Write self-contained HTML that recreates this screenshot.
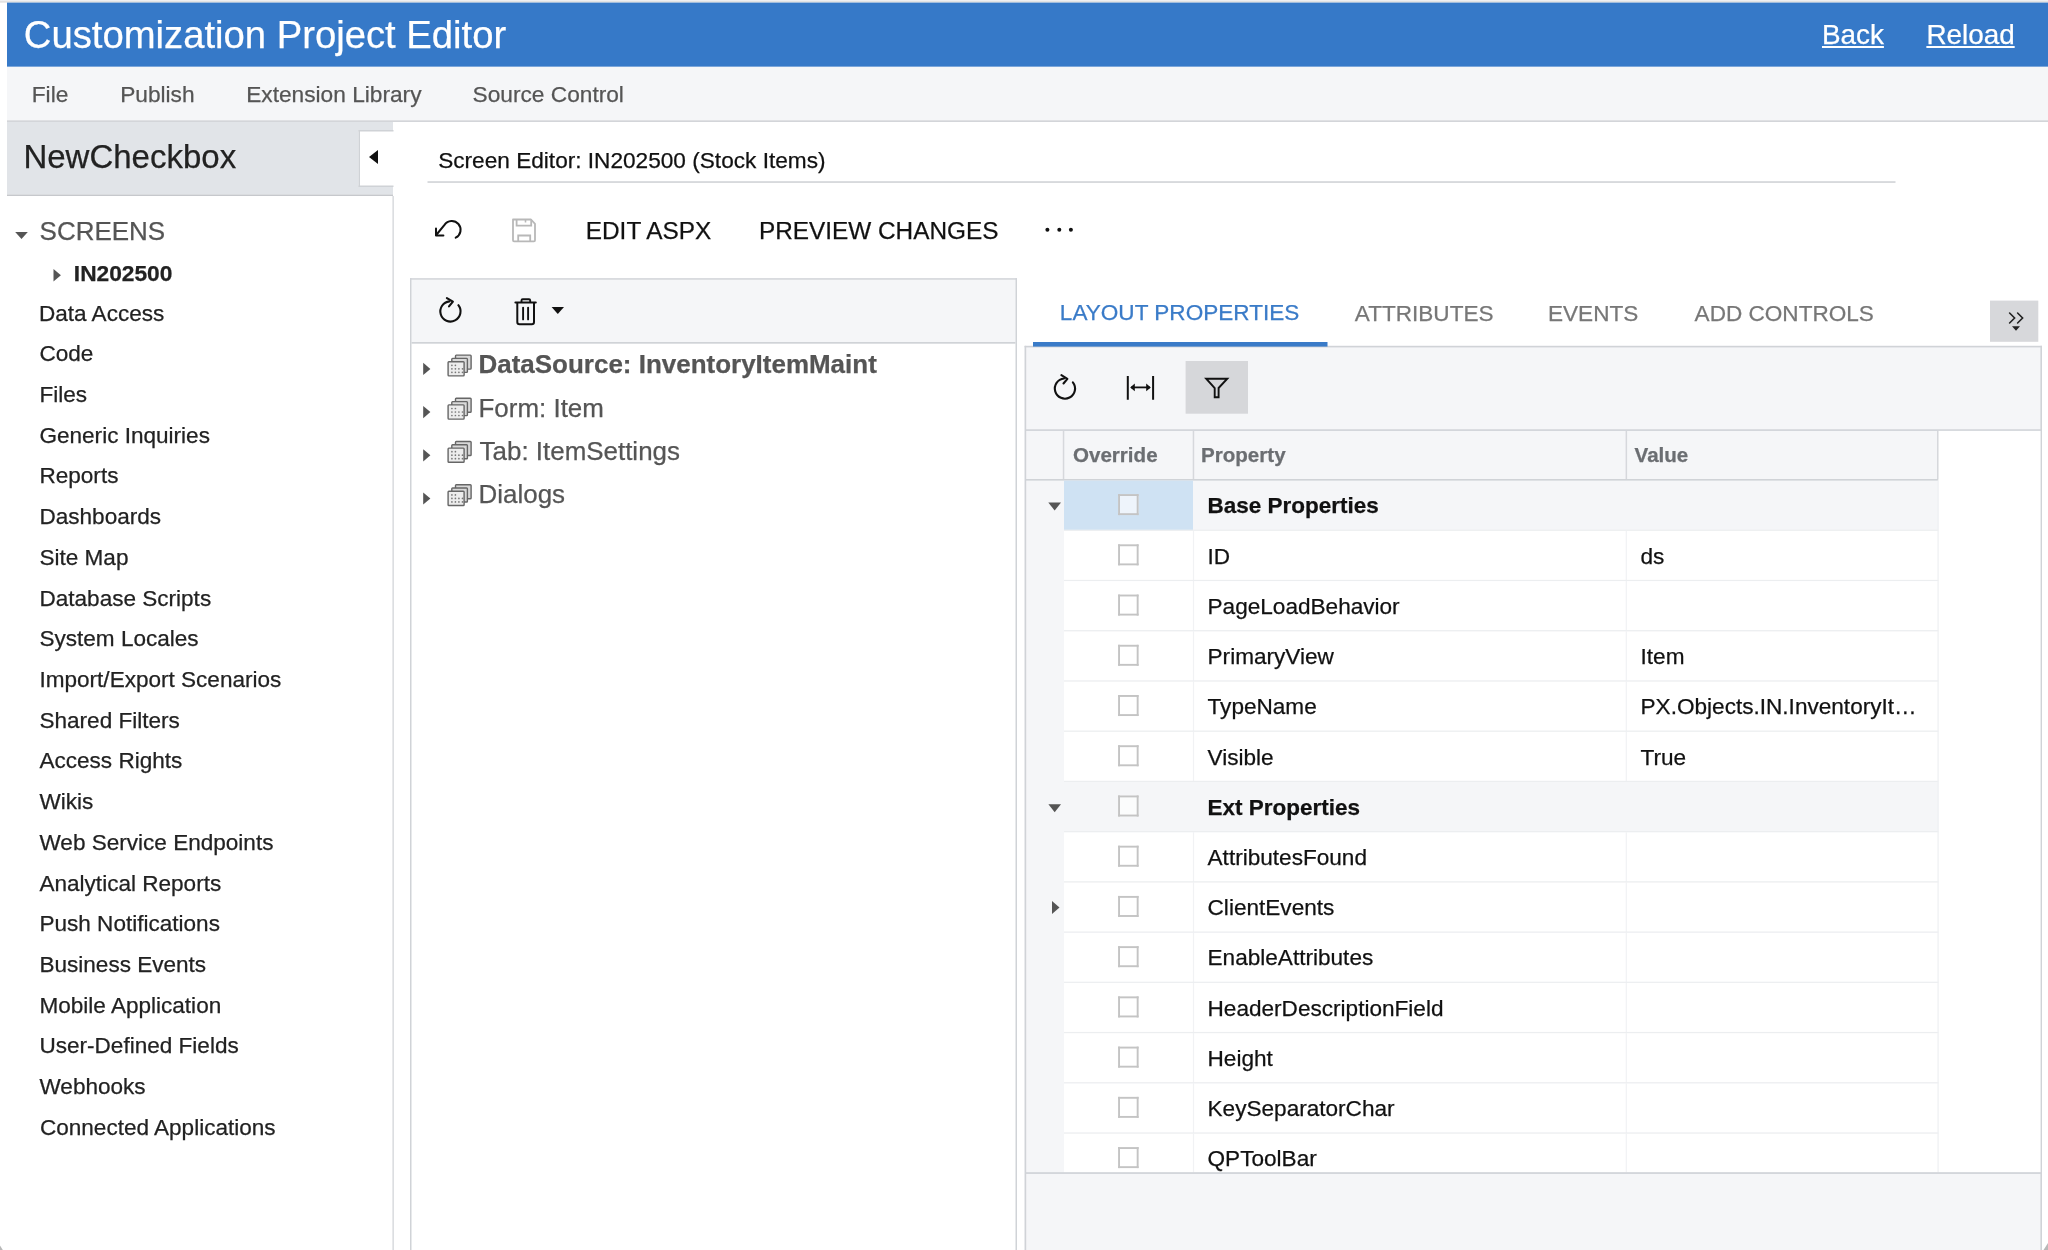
<!DOCTYPE html>
<html><head><meta charset="utf-8">
<style>
*{box-sizing:border-box;margin:0;padding:0}
html,body{width:2048px;height:1250px;overflow:hidden;background:#fff;font-family:"Liberation Sans",sans-serif;color:#000}
.a{position:absolute}
.t{position:absolute;white-space:nowrap;line-height:1;-webkit-text-stroke:0.25px currentColor}
#root{position:absolute;left:0;top:0;width:2048px;height:1250px;overflow:hidden;will-change:transform}
</style></head><body><div id="root">
<svg class="a" style="left:0;top:0" width="2048" height="1250" viewBox="0 0 2048 1250"><rect x="0" y="0" width="2048" height="1.2" fill="#efeff1"/><rect x="0" y="1.2" width="2048" height="1.4" fill="#dcdcdc"/><rect x="7" y="2.6" width="2041" height="64.2" fill="#3679c8"/><rect x="7" y="66.8" width="2041" height="53.5" fill="#f5f6f8"/><rect x="7" y="120.3" width="2041" height="1.7" fill="#d3d5d9"/><rect x="7" y="122" width="386" height="72.5" fill="#e1e4e8"/><rect x="7" y="194.5" width="386" height="1.5" fill="#c6c8cc"/><rect x="392.4" y="196" width="1.5" height="1054" fill="#d9dbde"/><rect x="358.5" y="130" width="35.5" height="57" fill="#fff"/><rect x="358.5" y="130" width="35.0" height="1.5" fill="#cfd2d6"/><rect x="358.5" y="185.5" width="35.0" height="1.5" fill="#cfd2d6"/><rect x="358.5" y="130" width="1.5" height="57" fill="#cfd2d6"/><rect x="427.5" y="181.2" width="1468.0" height="1.7" fill="#d3d5d9"/><rect x="411.5" y="279.7" width="604.0" height="62.3" fill="#f5f6f8"/><rect x="410" y="278.2" width="607" height="1.5" fill="#d0d3d7"/><rect x="410" y="278.2" width="1.5" height="981.8" fill="#d0d3d7"/><rect x="1015.5" y="278.2" width="1.5" height="981.8" fill="#d0d3d7"/><rect x="411.5" y="342" width="604.0" height="1.7" fill="#d0d3d7"/><rect x="1024.6" y="345.8" width="1017.4" height="904.2" fill="#f5f6f8"/><rect x="1024.6" y="345.8" width="1017.4" height="1.6" fill="#d0d3d7"/><rect x="1024.6" y="345.8" width="1.6" height="914.2" fill="#d0d3d7"/><rect x="2040.4" y="345.8" width="1.6" height="914.2" fill="#d0d3d7"/><rect x="1033" y="342" width="294.5" height="4.6" fill="#3a7bc8"/><rect x="1185.6" y="361" width="62.4" height="52.7" fill="#d6d7da"/><rect x="1990" y="300.6" width="48.3" height="41.2" fill="#d7d8db"/><rect x="1025" y="429.3" width="1016.8" height="1.6" fill="#d0d3d7"/><rect x="1938.3" y="430.9" width="102.1" height="741.6" fill="#fff"/><rect x="1025" y="479" width="913.3" height="1.6" fill="#d0d3d7"/><rect x="1062.8" y="430.9" width="1.5" height="48.1" fill="#d6d8dc"/><rect x="1192.7" y="430.9" width="1.5" height="48.1" fill="#d6d8dc"/><rect x="1625.6" y="430.9" width="1.5" height="48.1" fill="#d6d8dc"/><rect x="1937" y="430.9" width="1.5" height="48.1" fill="#d6d8dc"/><rect x="1064" y="480.6" width="129" height="49.63" fill="#cfe2f3"/><rect x="1064" y="530.83" width="874.3" height="49.63" fill="#fff"/><rect x="1192.9" y="530.83" width="1.2" height="49.63" fill="#f1f2f4"/><rect x="1625.7" y="530.83" width="1.2" height="49.63" fill="#f1f2f4"/><rect x="1064" y="529.63" width="874.3" height="1.2" fill="#eceef0"/><rect x="1064" y="581.0600000000001" width="874.3" height="49.63" fill="#fff"/><rect x="1192.9" y="581.0600000000001" width="1.2" height="49.63" fill="#f1f2f4"/><rect x="1625.7" y="581.0600000000001" width="1.2" height="49.63" fill="#f1f2f4"/><rect x="1064" y="579.86" width="874.3" height="1.2" fill="#eceef0"/><rect x="1064" y="631.29" width="874.3" height="49.63" fill="#fff"/><rect x="1192.9" y="631.29" width="1.2" height="49.63" fill="#f1f2f4"/><rect x="1625.7" y="631.29" width="1.2" height="49.63" fill="#f1f2f4"/><rect x="1064" y="630.09" width="874.3" height="1.2" fill="#eceef0"/><rect x="1064" y="681.52" width="874.3" height="49.63" fill="#fff"/><rect x="1192.9" y="681.52" width="1.2" height="49.63" fill="#f1f2f4"/><rect x="1625.7" y="681.52" width="1.2" height="49.63" fill="#f1f2f4"/><rect x="1064" y="680.3199999999999" width="874.3" height="1.2" fill="#eceef0"/><rect x="1064" y="731.75" width="874.3" height="49.63" fill="#fff"/><rect x="1192.9" y="731.75" width="1.2" height="49.63" fill="#f1f2f4"/><rect x="1625.7" y="731.75" width="1.2" height="49.63" fill="#f1f2f4"/><rect x="1064" y="730.55" width="874.3" height="1.2" fill="#eceef0"/><rect x="1064" y="780.78" width="874.3" height="1.2" fill="#eceef0"/><rect x="1064" y="832.21" width="874.3" height="49.63" fill="#fff"/><rect x="1192.9" y="832.21" width="1.2" height="49.63" fill="#f1f2f4"/><rect x="1625.7" y="832.21" width="1.2" height="49.63" fill="#f1f2f4"/><rect x="1064" y="831.0099999999999" width="874.3" height="1.2" fill="#eceef0"/><rect x="1064" y="882.44" width="874.3" height="49.63" fill="#fff"/><rect x="1192.9" y="882.44" width="1.2" height="49.63" fill="#f1f2f4"/><rect x="1625.7" y="882.44" width="1.2" height="49.63" fill="#f1f2f4"/><rect x="1064" y="881.2399999999999" width="874.3" height="1.2" fill="#eceef0"/><rect x="1064" y="932.6700000000001" width="874.3" height="49.63" fill="#fff"/><rect x="1192.9" y="932.6700000000001" width="1.2" height="49.63" fill="#f1f2f4"/><rect x="1625.7" y="932.6700000000001" width="1.2" height="49.63" fill="#f1f2f4"/><rect x="1064" y="931.4699999999999" width="874.3" height="1.2" fill="#eceef0"/><rect x="1064" y="982.9" width="874.3" height="49.63" fill="#fff"/><rect x="1192.9" y="982.9" width="1.2" height="49.63" fill="#f1f2f4"/><rect x="1625.7" y="982.9" width="1.2" height="49.63" fill="#f1f2f4"/><rect x="1064" y="981.6999999999999" width="874.3" height="1.2" fill="#eceef0"/><rect x="1064" y="1033.13" width="874.3" height="49.63" fill="#fff"/><rect x="1192.9" y="1033.13" width="1.2" height="49.63" fill="#f1f2f4"/><rect x="1625.7" y="1033.13" width="1.2" height="49.63" fill="#f1f2f4"/><rect x="1064" y="1031.93" width="874.3" height="1.2" fill="#eceef0"/><rect x="1064" y="1083.3600000000001" width="874.3" height="49.63" fill="#fff"/><rect x="1192.9" y="1083.3600000000001" width="1.2" height="49.63" fill="#f1f2f4"/><rect x="1625.7" y="1083.3600000000001" width="1.2" height="49.63" fill="#f1f2f4"/><rect x="1064" y="1082.16" width="874.3" height="1.2" fill="#eceef0"/><rect x="1064" y="1133.5900000000001" width="874.3" height="38.91" fill="#fff"/><rect x="1192.9" y="1133.5900000000001" width="1.2" height="38.91" fill="#f1f2f4"/><rect x="1625.7" y="1133.5900000000001" width="1.2" height="38.91" fill="#f1f2f4"/><rect x="1064" y="1132.39" width="874.3" height="1.2" fill="#eceef0"/><rect x="1937.5" y="480.6" width="1.2" height="691.9" fill="#eef0f2"/><rect x="1025" y="1172.2" width="1016.8" height="1.7" fill="#d0d3d7"/><rect x="1118.1" y="494.1" width="20.5" height="21.0" fill="#eef4fb"/><rect x="1118.1" y="494.1" width="20.5" height="1.9" fill="#c4c4c4"/><rect x="1118.1" y="513.2" width="20.5" height="1.9" fill="#c4c4c4"/><rect x="1118.1" y="494.1" width="1.9" height="21.0" fill="#c4c4c4"/><rect x="1136.6999999999998" y="494.1" width="1.9" height="21.0" fill="#c4c4c4"/><rect x="1118.1" y="544.33" width="20.5" height="21.0" fill="#fff"/><rect x="1118.1" y="544.33" width="20.5" height="1.9" fill="#c4c4c4"/><rect x="1118.1" y="563.4300000000001" width="20.5" height="1.9" fill="#c4c4c4"/><rect x="1118.1" y="544.33" width="1.9" height="21.0" fill="#c4c4c4"/><rect x="1136.6999999999998" y="544.33" width="1.9" height="21.0" fill="#c4c4c4"/><rect x="1118.1" y="594.5600000000001" width="20.5" height="21.0" fill="#fff"/><rect x="1118.1" y="594.5600000000001" width="20.5" height="1.9" fill="#c4c4c4"/><rect x="1118.1" y="613.6600000000001" width="20.5" height="1.9" fill="#c4c4c4"/><rect x="1118.1" y="594.5600000000001" width="1.9" height="21.0" fill="#c4c4c4"/><rect x="1136.6999999999998" y="594.5600000000001" width="1.9" height="21.0" fill="#c4c4c4"/><rect x="1118.1" y="644.7900000000001" width="20.5" height="21.0" fill="#fff"/><rect x="1118.1" y="644.7900000000001" width="20.5" height="1.9" fill="#c4c4c4"/><rect x="1118.1" y="663.8900000000001" width="20.5" height="1.9" fill="#c4c4c4"/><rect x="1118.1" y="644.7900000000001" width="1.9" height="21.0" fill="#c4c4c4"/><rect x="1136.6999999999998" y="644.7900000000001" width="1.9" height="21.0" fill="#c4c4c4"/><rect x="1118.1" y="695.02" width="20.5" height="21.0" fill="#fff"/><rect x="1118.1" y="695.02" width="20.5" height="1.9" fill="#c4c4c4"/><rect x="1118.1" y="714.12" width="20.5" height="1.9" fill="#c4c4c4"/><rect x="1118.1" y="695.02" width="1.9" height="21.0" fill="#c4c4c4"/><rect x="1136.6999999999998" y="695.02" width="1.9" height="21.0" fill="#c4c4c4"/><rect x="1118.1" y="745.25" width="20.5" height="21.0" fill="#fff"/><rect x="1118.1" y="745.25" width="20.5" height="1.9" fill="#c4c4c4"/><rect x="1118.1" y="764.35" width="20.5" height="1.9" fill="#c4c4c4"/><rect x="1118.1" y="745.25" width="1.9" height="21.0" fill="#c4c4c4"/><rect x="1136.6999999999998" y="745.25" width="1.9" height="21.0" fill="#c4c4c4"/><rect x="1118.1" y="795.48" width="20.5" height="21.0" fill="#fbfcfc"/><rect x="1118.1" y="795.48" width="20.5" height="1.9" fill="#c4c4c4"/><rect x="1118.1" y="814.58" width="20.5" height="1.9" fill="#c4c4c4"/><rect x="1118.1" y="795.48" width="1.9" height="21.0" fill="#c4c4c4"/><rect x="1136.6999999999998" y="795.48" width="1.9" height="21.0" fill="#c4c4c4"/><rect x="1118.1" y="845.7099999999999" width="20.5" height="21.0" fill="#fff"/><rect x="1118.1" y="845.7099999999999" width="20.5" height="1.9" fill="#c4c4c4"/><rect x="1118.1" y="864.81" width="20.5" height="1.9" fill="#c4c4c4"/><rect x="1118.1" y="845.7099999999999" width="1.9" height="21.0" fill="#c4c4c4"/><rect x="1136.6999999999998" y="845.7099999999999" width="1.9" height="21.0" fill="#c4c4c4"/><rect x="1118.1" y="895.9399999999999" width="20.5" height="21.0" fill="#fff"/><rect x="1118.1" y="895.9399999999999" width="20.5" height="1.9" fill="#c4c4c4"/><rect x="1118.1" y="915.04" width="20.5" height="1.9" fill="#c4c4c4"/><rect x="1118.1" y="895.9399999999999" width="1.9" height="21.0" fill="#c4c4c4"/><rect x="1136.6999999999998" y="895.9399999999999" width="1.9" height="21.0" fill="#c4c4c4"/><rect x="1118.1" y="946.17" width="20.5" height="21.0" fill="#fff"/><rect x="1118.1" y="946.17" width="20.5" height="1.9" fill="#c4c4c4"/><rect x="1118.1" y="965.27" width="20.5" height="1.9" fill="#c4c4c4"/><rect x="1118.1" y="946.17" width="1.9" height="21.0" fill="#c4c4c4"/><rect x="1136.6999999999998" y="946.17" width="1.9" height="21.0" fill="#c4c4c4"/><rect x="1118.1" y="996.4" width="20.5" height="21.0" fill="#fff"/><rect x="1118.1" y="996.4" width="20.5" height="1.9" fill="#c4c4c4"/><rect x="1118.1" y="1015.5" width="20.5" height="1.9" fill="#c4c4c4"/><rect x="1118.1" y="996.4" width="1.9" height="21.0" fill="#c4c4c4"/><rect x="1136.6999999999998" y="996.4" width="1.9" height="21.0" fill="#c4c4c4"/><rect x="1118.1" y="1046.6299999999999" width="20.5" height="21.0" fill="#fff"/><rect x="1118.1" y="1046.6299999999999" width="20.5" height="1.9" fill="#c4c4c4"/><rect x="1118.1" y="1065.7299999999998" width="20.5" height="1.9" fill="#c4c4c4"/><rect x="1118.1" y="1046.6299999999999" width="1.9" height="21.0" fill="#c4c4c4"/><rect x="1136.6999999999998" y="1046.6299999999999" width="1.9" height="21.0" fill="#c4c4c4"/><rect x="1118.1" y="1096.86" width="20.5" height="21.0" fill="#fff"/><rect x="1118.1" y="1096.86" width="20.5" height="1.9" fill="#c4c4c4"/><rect x="1118.1" y="1115.9599999999998" width="20.5" height="1.9" fill="#c4c4c4"/><rect x="1118.1" y="1096.86" width="1.9" height="21.0" fill="#c4c4c4"/><rect x="1136.6999999999998" y="1096.86" width="1.9" height="21.0" fill="#c4c4c4"/><rect x="1118.1" y="1147.09" width="20.5" height="21.0" fill="#fff"/><rect x="1118.1" y="1147.09" width="20.5" height="1.9" fill="#c4c4c4"/><rect x="1118.1" y="1166.1899999999998" width="20.5" height="1.9" fill="#c4c4c4"/><rect x="1118.1" y="1147.09" width="1.9" height="21.0" fill="#c4c4c4"/><rect x="1136.6999999999998" y="1147.09" width="1.9" height="21.0" fill="#c4c4c4"/></svg>
<div class="t" style="left:23.81px;top:16.03px;font-size:38.24px;font-weight:400;color:#fff;">Customization Project Editor</div>
<div class="t" style="left:1821.97px;top:20.81px;font-size:27.87px;font-weight:400;color:#fff;text-decoration:underline;text-decoration-thickness:2.4px;text-underline-offset:1.8px">Back</div>
<div class="t" style="left:1926.38px;top:20.81px;font-size:27.87px;font-weight:400;color:#fff;text-decoration:underline;text-decoration-thickness:2.4px;text-underline-offset:1.8px">Reload</div>
<div class="t" style="left:31.78px;top:83.2px;font-size:22.69px;font-weight:400;color:#555;">File</div>
<div class="t" style="left:120.18px;top:83.2px;font-size:22.69px;font-weight:400;color:#555;">Publish</div>
<div class="t" style="left:246.19px;top:83.2px;font-size:22.69px;font-weight:400;color:#555;">Extension Library</div>
<div class="t" style="left:472.59px;top:83.2px;font-size:22.69px;font-weight:400;color:#555;">Source Control</div>
<div class="t" style="left:23.4px;top:139.67px;font-size:33.0px;font-weight:400;color:#222;">NewCheckbox</div>
<div class="t" style="left:39.55px;top:218.4px;font-size:25.99px;font-weight:400;color:#555;">SCREENS</div>
<div class="t" style="left:73.82px;top:262.45px;font-size:22.74px;font-weight:700;color:#222;">IN202500</div>
<div class="t" style="left:38.97px;top:302.51px;font-size:22.55px;font-weight:400;color:#222;">Data Access</div>
<div class="t" style="left:39.48px;top:343.23px;font-size:22.55px;font-weight:400;color:#222;">Code</div>
<div class="t" style="left:39.48px;top:383.95px;font-size:22.55px;font-weight:400;color:#222;">Files</div>
<div class="t" style="left:39.48px;top:424.67px;font-size:22.55px;font-weight:400;color:#222;">Generic Inquiries</div>
<div class="t" style="left:39.48px;top:465.39px;font-size:22.55px;font-weight:400;color:#222;">Reports</div>
<div class="t" style="left:39.48px;top:506.11px;font-size:22.55px;font-weight:400;color:#222;">Dashboards</div>
<div class="t" style="left:39.48px;top:546.83px;font-size:22.55px;font-weight:400;color:#222;">Site Map</div>
<div class="t" style="left:39.48px;top:587.55px;font-size:22.55px;font-weight:400;color:#222;">Database Scripts</div>
<div class="t" style="left:39.48px;top:628.27px;font-size:22.55px;font-weight:400;color:#222;">System Locales</div>
<div class="t" style="left:39.48px;top:668.99px;font-size:22.55px;font-weight:400;color:#222;">Import/Export Scenarios</div>
<div class="t" style="left:39.48px;top:709.71px;font-size:22.55px;font-weight:400;color:#222;">Shared Filters</div>
<div class="t" style="left:39.48px;top:750.43px;font-size:22.55px;font-weight:400;color:#222;">Access Rights</div>
<div class="t" style="left:39.48px;top:791.15px;font-size:22.55px;font-weight:400;color:#222;">Wikis</div>
<div class="t" style="left:39.48px;top:831.87px;font-size:22.55px;font-weight:400;color:#222;">Web Service Endpoints</div>
<div class="t" style="left:39.48px;top:872.59px;font-size:22.55px;font-weight:400;color:#222;">Analytical Reports</div>
<div class="t" style="left:39.48px;top:913.31px;font-size:22.55px;font-weight:400;color:#222;">Push Notifications</div>
<div class="t" style="left:39.48px;top:954.03px;font-size:22.55px;font-weight:400;color:#222;">Business Events</div>
<div class="t" style="left:39.48px;top:994.75px;font-size:22.55px;font-weight:400;color:#222;">Mobile Application</div>
<div class="t" style="left:39.48px;top:1035.47px;font-size:22.55px;font-weight:400;color:#222;">User-Defined Fields</div>
<div class="t" style="left:39.48px;top:1076.19px;font-size:22.55px;font-weight:400;color:#222;">Webhooks</div>
<div class="t" style="left:39.98px;top:1116.91px;font-size:22.55px;font-weight:400;color:#222;">Connected Applications</div>
<div class="t" style="left:438.18px;top:150.43px;font-size:22.64px;font-weight:400;color:#111;">Screen Editor: IN202500 (Stock Items)</div>
<div class="t" style="left:585.81px;top:219.39px;font-size:24.35px;font-weight:400;color:#111;">EDIT ASPX</div>
<div class="t" style="left:759.01px;top:219.39px;font-size:24.35px;font-weight:400;color:#111;">PREVIEW CHANGES</div>
<div class="t" style="left:478.53px;top:352.32px;font-size:25.97px;font-weight:700;color:#555;">DataSource: InventoryItemMaint</div>
<div class="t" style="left:478.54px;top:395.83px;font-size:25.95px;font-weight:400;color:#555;">Form: Item</div>
<div class="t" style="left:479.57px;top:438.93px;font-size:25.95px;font-weight:400;color:#555;">Tab: ItemSettings</div>
<div class="t" style="left:478.54px;top:481.93px;font-size:25.95px;font-weight:400;color:#555;">Dialogs</div>
<div class="t" style="left:1059.83px;top:302.39px;font-size:22.57px;font-weight:400;color:#3a7bc8;">LAYOUT PROPERTIES</div>
<div class="t" style="left:1354.81px;top:302.89px;font-size:22.57px;font-weight:400;color:#777;">ATTRIBUTES</div>
<div class="t" style="left:1548.03px;top:302.89px;font-size:22.57px;font-weight:400;color:#777;">EVENTS</div>
<div class="t" style="left:1694.6px;top:302.89px;font-size:22.57px;font-weight:400;color:#777;">ADD CONTROLS</div>
<div class="t" style="left:1073.01px;top:444.89px;font-size:20.57px;font-weight:700;color:#6b6e72;">Override</div>
<div class="t" style="left:1201.02px;top:444.89px;font-size:20.57px;font-weight:700;color:#6b6e72;">Property</div>
<div class="t" style="left:1634.59px;top:444.89px;font-size:20.57px;font-weight:700;color:#6b6e72;">Value</div>
<div class="t" style="left:1207.57px;top:495.46px;font-size:22.49px;font-weight:700;color:#111;">Base Properties</div>
<div class="t" style="left:1207.57px;top:545.62px;font-size:22.58px;font-weight:400;color:#111;">ID</div>
<div class="t" style="left:1640.57px;top:545.62px;font-size:22.58px;font-weight:400;color:#111;">ds</div>
<div class="t" style="left:1207.57px;top:595.85px;font-size:22.58px;font-weight:400;color:#111;">PageLoadBehavior</div>
<div class="t" style="left:1207.57px;top:646.08px;font-size:22.58px;font-weight:400;color:#111;">PrimaryView</div>
<div class="t" style="left:1640.57px;top:646.08px;font-size:22.58px;font-weight:400;color:#111;">Item</div>
<div class="t" style="left:1207.57px;top:696.31px;font-size:22.58px;font-weight:400;color:#111;">TypeName</div>
<div class="t" style="left:1640.57px;top:696.31px;font-size:22.58px;font-weight:400;color:#111;">PX.Objects.IN.InventoryIt…</div>
<div class="t" style="left:1207.57px;top:746.54px;font-size:22.58px;font-weight:400;color:#111;">Visible</div>
<div class="t" style="left:1640.57px;top:746.54px;font-size:22.58px;font-weight:400;color:#111;">True</div>
<div class="t" style="left:1207.57px;top:796.84px;font-size:22.49px;font-weight:700;color:#111;">Ext Properties</div>
<div class="t" style="left:1207.57px;top:847.0px;font-size:22.58px;font-weight:400;color:#111;">AttributesFound</div>
<div class="t" style="left:1207.57px;top:897.23px;font-size:22.58px;font-weight:400;color:#111;">ClientEvents</div>
<div class="t" style="left:1207.57px;top:947.46px;font-size:22.58px;font-weight:400;color:#111;">EnableAttributes</div>
<div class="t" style="left:1207.57px;top:997.69px;font-size:22.58px;font-weight:400;color:#111;">HeaderDescriptionField</div>
<div class="t" style="left:1207.57px;top:1047.92px;font-size:22.58px;font-weight:400;color:#111;">Height</div>
<div class="t" style="left:1207.57px;top:1098.15px;font-size:22.58px;font-weight:400;color:#111;">KeySeparatorChar</div>
<div class="t" style="left:1207.57px;top:1148.38px;font-size:22.58px;font-weight:400;color:#111;">QPToolBar</div>
<svg class="a" style="left:0;top:0" width="2048" height="1250" viewBox="0 0 2048 1250"><polygon points="378,150 378,164 369,157" fill="#111"/><polygon points="15.2,232 27.8,232 21.5,239" fill="#555"/><polygon points="53.5,269 53.5,281.4 60.9,275.2" fill="#555"/><path d="M436.2,235 L444.5,224.9 A8.8,8.8 0 1 1 455.7,237.7" fill="none" stroke="#111" stroke-width="2" stroke-linecap="round"/><path d="M436,228.6 L436,235.6 L443.4,235.6" fill="none" stroke="#111" stroke-width="2" stroke-linecap="round" stroke-linejoin="round"/><path d="M513,219.5 L531,219.5 L535,223.8 L535,240.3 Q535,241.4 534,241.4 L514,241.4 Q513,241.4 513,240.3 Z" fill="none" stroke="#b8b8b8" stroke-width="1.8" stroke-linejoin="round"/><path d="M516.6,219.5 L516.6,225.6 L531.2,225.6 L531.2,219.8" fill="none" stroke="#b8b8b8" stroke-width="1.8"/><path d="M525.5,219.5 L525.5,222.5" fill="none" stroke="#b8b8b8" stroke-width="1.6"/><path d="M518.2,241.4 L518.2,235.5 L530.2,235.5 L530.2,241.4" fill="none" stroke="#b8b8b8" stroke-width="1.8"/><circle cx="1047.4" cy="229.8" r="2.0" fill="#111"/><circle cx="1059.3" cy="229.8" r="2.0" fill="#111"/><circle cx="1070.9" cy="229.8" r="2.0" fill="#111"/><path d="M1072.86,382.3 A10.1,10.1 0 1 1 1064.0,378.5" fill="none" stroke="#111" stroke-width="2.1" stroke-linecap="round"/><path d="M1061.4,375.2 L1067.4,378.8 L1063.5,383.5" fill="none" stroke="#111" stroke-width="2.1" stroke-linecap="round" stroke-linejoin="round"/><g transform="translate(-614.5,-77.1)"><path d="M1072.86,382.3 A10.1,10.1 0 1 1 1064.0,378.5" fill="none" stroke="#111" stroke-width="2.1" stroke-linecap="round"/><path d="M1061.4,375.2 L1067.4,378.8 L1063.5,383.5" fill="none" stroke="#111" stroke-width="2.1" stroke-linecap="round" stroke-linejoin="round"/></g><path d="M515.4,302.6 L535.8,302.6" stroke="#111" stroke-width="2" stroke-linecap="round"/><path d="M521.5,302.6 L521.5,300.5 Q521.5,299.3 522.7,299.3 L529,299.3 Q530.2,299.3 530.2,300.5 L530.2,302.6" fill="none" stroke="#111" stroke-width="1.9"/><path d="M517.3,302.6 L517.3,322 Q517.3,324.2 519.5,324.2 L531.8,324.2 Q534,324.2 534,322 L534,302.6" fill="none" stroke="#111" stroke-width="2"/><path d="M523.1,307.6 L523.1,319.4 M528.1,307.6 L528.1,319.4" stroke="#111" stroke-width="1.9" stroke-linecap="round"/><polygon points="551.6,307 564,307 557.8,314" fill="#111"/><polygon points="423.2,362.8 423.2,375.0 430.4,368.9" fill="#555"/><g transform="translate(0.0,0.0)"><rect x="455.5" y="355.1" width="15.6" height="14" fill="#d9d9d9" stroke="#666" stroke-width="1.4" rx="0.8"/><rect x="451.8" y="358.4" width="15.6" height="14" fill="#d9d9d9" stroke="#666" stroke-width="1.4" rx="0.8"/><rect x="448.1" y="361.7" width="16" height="14.2" fill="#ececec" stroke="#666" stroke-width="1.4" rx="0.8"/><circle cx="451.9" cy="365.3" r="0.85" fill="#777"/><circle cx="455.4" cy="365.3" r="0.85" fill="#777"/><circle cx="451.9" cy="368.8" r="0.85" fill="#777"/><circle cx="455.4" cy="368.8" r="0.85" fill="#777"/><circle cx="458.9" cy="368.8" r="0.85" fill="#777"/><circle cx="462.5" cy="368.8" r="0.85" fill="#777"/><circle cx="451.9" cy="372.3" r="0.85" fill="#777"/><circle cx="455.4" cy="372.3" r="0.85" fill="#777"/><circle cx="458.9" cy="372.3" r="0.85" fill="#777"/><circle cx="462.5" cy="372.3" r="0.85" fill="#777"/></g><polygon points="423.2,406.0 423.2,418.2 430.4,412.09999999999997" fill="#555"/><g transform="translate(0.0,43.19999999999999)"><rect x="455.5" y="355.1" width="15.6" height="14" fill="#d9d9d9" stroke="#666" stroke-width="1.4" rx="0.8"/><rect x="451.8" y="358.4" width="15.6" height="14" fill="#d9d9d9" stroke="#666" stroke-width="1.4" rx="0.8"/><rect x="448.1" y="361.7" width="16" height="14.2" fill="#ececec" stroke="#666" stroke-width="1.4" rx="0.8"/><circle cx="451.9" cy="365.3" r="0.85" fill="#777"/><circle cx="455.4" cy="365.3" r="0.85" fill="#777"/><circle cx="451.9" cy="368.8" r="0.85" fill="#777"/><circle cx="455.4" cy="368.8" r="0.85" fill="#777"/><circle cx="458.9" cy="368.8" r="0.85" fill="#777"/><circle cx="462.5" cy="368.8" r="0.85" fill="#777"/><circle cx="451.9" cy="372.3" r="0.85" fill="#777"/><circle cx="455.4" cy="372.3" r="0.85" fill="#777"/><circle cx="458.9" cy="372.3" r="0.85" fill="#777"/><circle cx="462.5" cy="372.3" r="0.85" fill="#777"/></g><polygon points="423.2,449.20000000000005 423.2,461.4 430.4,455.29999999999995" fill="#555"/><g transform="translate(0.0,86.39999999999998)"><rect x="455.5" y="355.1" width="15.6" height="14" fill="#d9d9d9" stroke="#666" stroke-width="1.4" rx="0.8"/><rect x="451.8" y="358.4" width="15.6" height="14" fill="#d9d9d9" stroke="#666" stroke-width="1.4" rx="0.8"/><rect x="448.1" y="361.7" width="16" height="14.2" fill="#ececec" stroke="#666" stroke-width="1.4" rx="0.8"/><circle cx="451.9" cy="365.3" r="0.85" fill="#777"/><circle cx="455.4" cy="365.3" r="0.85" fill="#777"/><circle cx="451.9" cy="368.8" r="0.85" fill="#777"/><circle cx="455.4" cy="368.8" r="0.85" fill="#777"/><circle cx="458.9" cy="368.8" r="0.85" fill="#777"/><circle cx="462.5" cy="368.8" r="0.85" fill="#777"/><circle cx="451.9" cy="372.3" r="0.85" fill="#777"/><circle cx="455.4" cy="372.3" r="0.85" fill="#777"/><circle cx="458.9" cy="372.3" r="0.85" fill="#777"/><circle cx="462.5" cy="372.3" r="0.85" fill="#777"/></g><polygon points="423.2,492.40000000000003 423.2,504.6 430.4,498.5" fill="#555"/><g transform="translate(0.0,129.60000000000002)"><rect x="455.5" y="355.1" width="15.6" height="14" fill="#d9d9d9" stroke="#666" stroke-width="1.4" rx="0.8"/><rect x="451.8" y="358.4" width="15.6" height="14" fill="#d9d9d9" stroke="#666" stroke-width="1.4" rx="0.8"/><rect x="448.1" y="361.7" width="16" height="14.2" fill="#ececec" stroke="#666" stroke-width="1.4" rx="0.8"/><circle cx="451.9" cy="365.3" r="0.85" fill="#777"/><circle cx="455.4" cy="365.3" r="0.85" fill="#777"/><circle cx="451.9" cy="368.8" r="0.85" fill="#777"/><circle cx="455.4" cy="368.8" r="0.85" fill="#777"/><circle cx="458.9" cy="368.8" r="0.85" fill="#777"/><circle cx="462.5" cy="368.8" r="0.85" fill="#777"/><circle cx="451.9" cy="372.3" r="0.85" fill="#777"/><circle cx="455.4" cy="372.3" r="0.85" fill="#777"/><circle cx="458.9" cy="372.3" r="0.85" fill="#777"/><circle cx="462.5" cy="372.3" r="0.85" fill="#777"/></g><path d="M1127.8,376 L1127.8,399.7 M1153.1,376 L1153.1,399.7" stroke="#111" stroke-width="2"/><path d="M1131,387.4 L1150,387.4" stroke="#111" stroke-width="1.8"/><polygon points="1130.2,387.4 1134.8,383.6 1134.8,391.2" fill="#111"/><polygon points="1150.8,387.4 1146.2,383.6 1146.2,391.2" fill="#111"/><path d="M1206.2,378.7 L1227.3,378.7 L1218.6,388 L1218.6,397.3 L1214.7,397.3 L1214.7,388 Z" fill="none" stroke="#111" stroke-width="1.9" stroke-linejoin="miter"/><path d="M2009.6,313 L2014.6,318 L2009.6,323 M2017.6,313 L2022.6,318 L2017.6,323" fill="none" stroke="#222" stroke-width="1.6" stroke-linecap="round"/><polygon points="2012,326.2 2020,326.2 2016,330.8" fill="#222"/><polygon points="1048.3,502.5 1061,502.5 1054.65,510.5" fill="#555"/><polygon points="1048.4,804.3 1061,804.3 1054.7,812.2" fill="#555"/><polygon points="1052,901 1052,914 1059.5,907.5" fill="#555"/><polygon points="2043.5,1250 2048,1243 2048,1250" fill="#b8b8b8"/><polygon points="0,1245.5 2.8,1250 0,1250" fill="#b8b8b8"/></svg>
</div></body></html>
